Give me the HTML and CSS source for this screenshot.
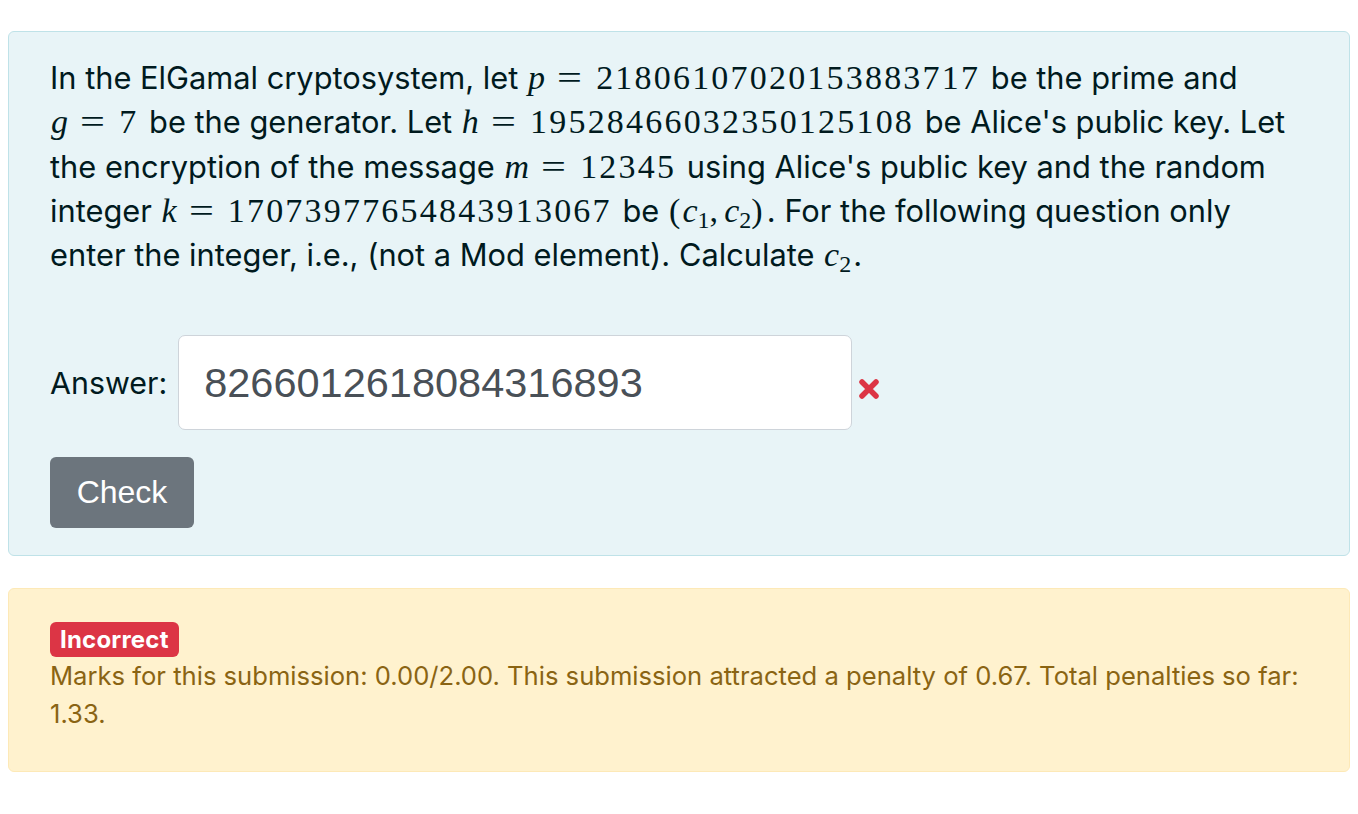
FILE: index.html
```html
<!DOCTYPE html>
<html>
<head>
<meta charset="utf-8">
<link rel="stylesheet" href="styles.css">
</head>
<body>
<div class="formulation">
  <p class="qtext">In the ElGamal cryptosystem, let <span class="m"><i>p</i><span class="eq">=</span>21806107020153883717</span> be the prime and<br><span class="m"><i>g</i><span class="eq">=</span>7</span> be the generator. Let <span class="m"><i>h</i><span class="eq">=</span>19528466032350125108</span> be Alice's public key. Let<br>the encryption of the message <span class="m"><i>m</i><span class="eq">=</span>12345</span> using Alice's public key and the random<br>integer <span class="m"><i>k</i><span class="eq">=</span>17073977654843913067</span> be <span class="m">(<i>c</i><sub>1</sub>,<span class="sp"></span><i>c</i><sub>2</sub>)</span>. For the following question only<br>enter the integer, i.e., (not a Mod element). Calculate <span class="m"><i>c</i><sub>2</sub></span>.</p>
  <div class="answer">
    <label class="lbl">Answer:</label>
    <div class="input">8266012618084316893</div>
    <svg class="xicon" width="22" height="22" viewBox="0 0 22 22"><path d="M4 4 L18 18 M18 4 L4 18" stroke="#dc3545" stroke-width="5.5" stroke-linecap="round"/></svg>
  </div>
  <button class="btn">Check</button>
</div>
<div class="outcome">
  <span class="badge">Incorrect</span>
  <div class="marks">Marks for this submission: 0.00/2.00. This submission attracted a penalty of 0.67. Total penalties so far: 1.33.</div>
</div>
</body>
</html>
```
FILE: styles.css
```css
body {
  margin: 8px;
  font-family: Inter, "Noto Sans", sans-serif;
  background: #fff;
}
.formulation {
  margin-top: 23px;
  background: #e8f4f7;
  border: 1px solid #bfe2e8;
  border-radius: 6px;
  padding: 24px 41px 27px 41px;
  color: #001a1e;
}
.qtext {
  margin: 0;
  font-size: 30.8px;
  line-height: 44.25px;
}
.m {
  font-family: "Liberation Serif", "DejaVu Serif", serif;
  font-size: 34px;
  line-height: 1;
  letter-spacing: 2.2px;
  padding: 0 2px 0 1px;
}
.m i { font-style: italic; letter-spacing: 0; }
.m sub { font-size: 24px; vertical-align: -6px; line-height: 0; letter-spacing: 0; }
.eq {
  display: inline-block;
  margin: 0 17px 0 15px;
  transform: scaleX(1.3);
  letter-spacing: 0;
}
.sp { display: inline-block; width: 4px; }
.answer {
  display: flex;
  align-items: center;
  margin-top: 58px;
}
.lbl {
  font-size: 30.4px;
  margin-right: 11px;
}
.input {
  width: 622px;
  height: 93px;
  box-sizing: content-box;
  background: #fff;
  border: 1.5px solid #ced4da;
  border-radius: 7px;
  padding: 0 25px;
  display: flex;
  align-items: center;
  font-family: "Liberation Sans", Arial, sans-serif;
  font-size: 41.5px;
  color: #495057;
}
.xicon { margin-left: 6px; margin-top: 12px; }
.btn {
  display: block;
  margin-top: 27px;
  width: 144px;
  height: 71px;
  border: none;
  border-radius: 6px;
  background: #6c757d;
  color: #fff;
  font-family: "Liberation Sans", Arial, sans-serif;
  font-size: 32px;
  padding: 0;
}
.outcome {
  margin-top: 32px;
  background: #fff2ce;
  border: 1px solid #fde9b7;
  border-radius: 6px;
  padding: 33px 41px 38px 41px;
  color: #8a6413;
}
.badge {
  display: inline-block;
  background: #dc3545;
  color: #fff;
  font-weight: 700;
  font-size: 24px;
  line-height: 35px;
  padding: 0 10px;
  border-radius: 6px;
  letter-spacing: 0.2px;
}
.marks {
  font-size: 25.6px;
  line-height: 38px;
}
```
